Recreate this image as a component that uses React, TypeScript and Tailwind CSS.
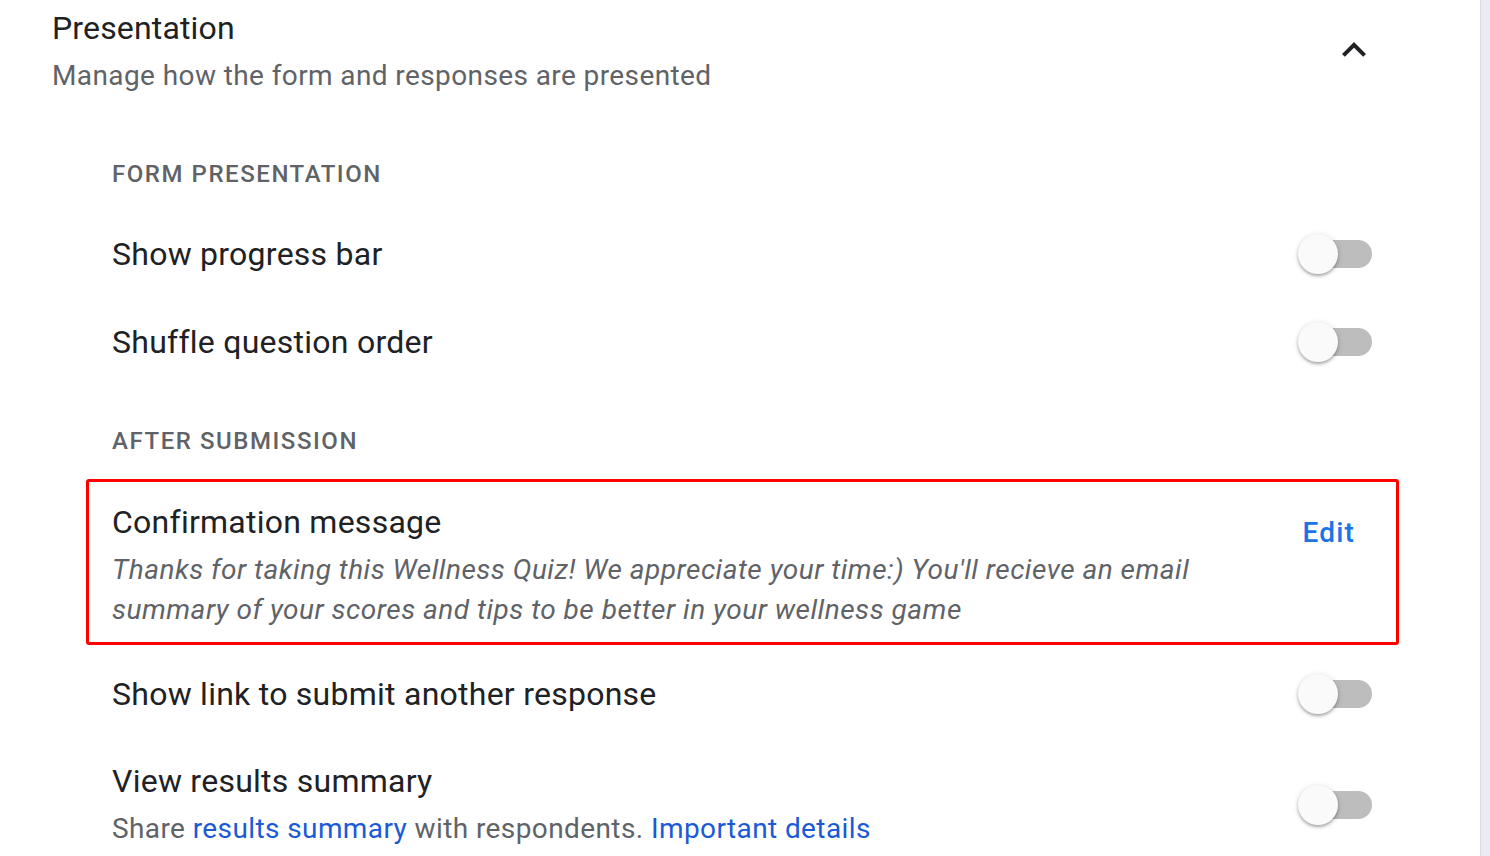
import React from "react"

function Toggle() {
    return (
        <div className="relative flex h-[40px] w-[74px] shrink-0 items-center">
            <div className="ml-[6px] h-[28px] w-[68px] rounded-full bg-[#bdbdbd]" />
            <div className="absolute left-0 top-0 h-[40px] w-[40px] rounded-full bg-[#fafafa] shadow-[0_2px_3px_rgba(0,0,0,0.28),0_1px_6px_rgba(0,0,0,0.12)]" />
        </div>
    )
}

function ToggleRow({ label }: { label: string }) {
    return (
        <div className="flex h-[88px] items-center justify-between">
            <span className="text-[32px] leading-[40px] tracking-[0.25px] text-[#202124]">{label}</span>
            <Toggle />
        </div>
    )
}

function SectionHeading({ children }: { children: React.ReactNode }) {
    return (
        <div className="h-[32px] text-[24px] font-medium uppercase leading-[32px] tracking-[1.55px] text-[#5f6368]">
            {children}
        </div>
    )
}

export default function App() {
    return (
        <div className="flex h-[856px] w-full overflow-hidden bg-white font-['Roboto',sans-serif] [font-variant-ligatures:none]">
            <div className="flex-1 pl-[52px] pr-[108px]">
                {/* Header */}
                <div className="flex items-start justify-between pt-[8px]">
                    <div>
                        <h1 className="text-[32px] leading-[40px] tracking-[0.15px] text-[#202124]">Presentation</h1>
                        <p className="mt-[8px] text-[28px] leading-[40px] tracking-[0.4px] text-[#5f6368]">
                            Manage how the form and responses are presented
                        </p>
                    </div>
                    <svg viewBox="0 0 24 24" className="-mr-[6px] mt-[18px] h-[48px] w-[48px]" fill="#202124">
                        <path d="M12 8l-6 6 1.41 1.41L12 10.83l4.59 4.58L18 14z" />
                    </svg>
                </div>

                <div className="pl-[60px]">
                    <div className="mt-[62px]">
                        <SectionHeading>Form presentation</SectionHeading>
                    </div>
                    <div className="mt-[20px]">
                        <ToggleRow label="Show progress bar" />
                        <ToggleRow label="Shuffle question order" />
                    </div>

                    <div className="mt-[39px]">
                        <SectionHeading>After submission</SectionHeading>
                    </div>

                    {/* Confirmation message (highlighted) */}
                    <div className="-ml-[26px] -mr-[27px] mt-[22px] flex h-[166px] justify-between rounded-[3px] border-[3px] border-[#ff0000] pb-[12px] pl-[23px] pr-[41px] pt-[20px]">
                        <div className="max-w-[1140px]">
                            <div className="text-[32px] leading-[40px] tracking-[0.25px] text-[#202124]">Confirmation message</div>
                            <p className="mt-[8px] text-[28px] italic leading-[40px] tracking-[0.5px] text-[#5f6368]">
                                Thanks for taking this Wellness Quiz! We appreciate your time:) You'll recieve an email summary of your scores and tips to be better in your wellness game
                            </p>
                        </div>
                        <button className="mt-[11px] self-start text-[28px] font-medium leading-[40px] tracking-[1.2px] text-[#1a73e8]">
                            Edit
                        </button>
                    </div>

                    <div className="mt-[5px]">
                        <ToggleRow label="Show link to submit another response" />
                    </div>

                    <div className="mt-[23px] flex items-center justify-between">
                        <div>
                            <div className="text-[32px] leading-[40px] tracking-[0.25px] text-[#202124]">View results summary</div>
                            <p className="mt-[8px] text-[28px] leading-[40px] tracking-[0.4px] text-[#5f6368]">
                                Share <span className="text-[#1a5ad6]">results summary</span> with respondents.{" "}
                                <span className="text-[#1a5ad6]">Important details</span>
                            </p>
                        </div>
                        <Toggle />
                    </div>
                </div>
            </div>

            {/* Side strip */}
            <div className="w-[10px] shrink-0 border-l border-[#dadce0] bg-[#ede9f7]" />
        </div>
    )
}
